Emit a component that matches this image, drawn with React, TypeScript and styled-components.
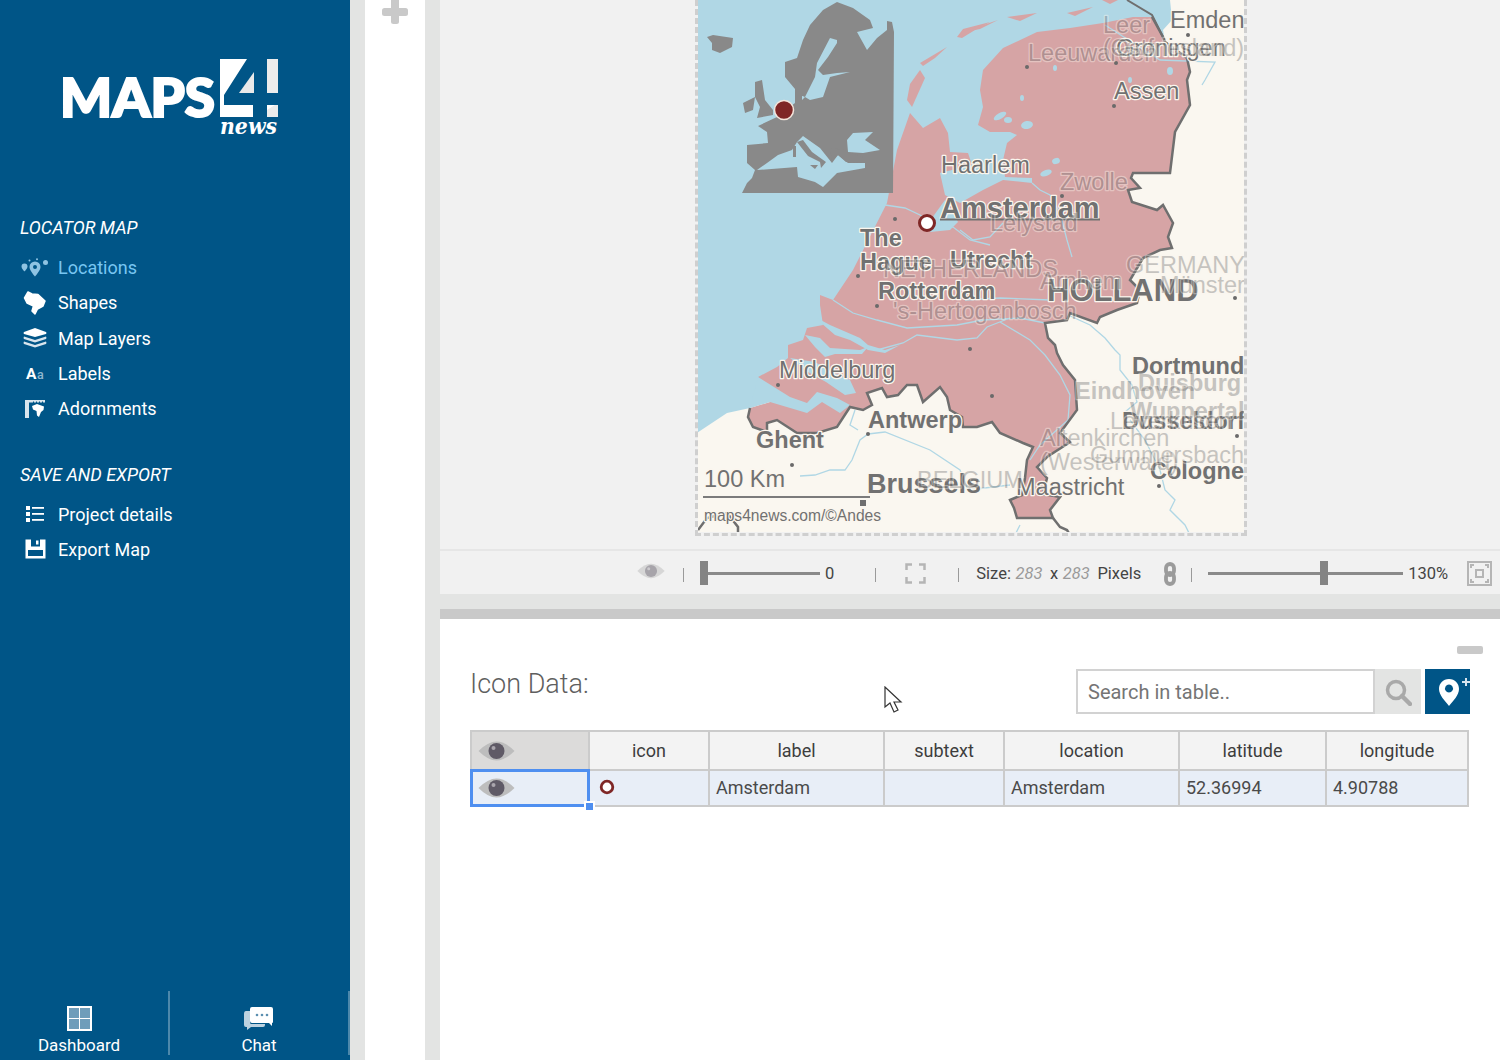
import React from "react";
import styled, { createGlobalStyle } from "styled-components";

const GlobalStyle = createGlobalStyle`
  html, body {
    margin: 0;
    padding: 0;
    width: 1500px;
    height: 1060px;
    overflow: hidden;
    background: #fff;
    font-family: Roboto, "Liberation Sans", sans-serif;
  }
  * { box-sizing: border-box; }
`;

const Page = styled.div`
  position: relative;
  display: grid;
  grid-template-columns: 350px 15px 60px 15px 1fr;
  width: 1500px;
  height: 1060px;
  overflow: hidden;
`;

const Sidebar = styled.aside`
  display: flex;
  flex-direction: column;
  background: #005587;
  color: #fff;
`;

const LogoWrap = styled.div`
  height: 215px;
  padding: 57px 0 0 60px;
`;

const NavTitle = styled.div`
  padding-left: 20px;
  height: 26px;
  line-height: 26px;
  font-size: 18px;
  font-style: italic;
  color: #fff;
`;

const NavList = styled.div<{ $top?: number }>`
  display: flex;
  flex-direction: column;
  margin-top: ${(p) => p.$top ?? 9}px;
  margin-bottom: 36px;
`;

const NavItem = styled.div<{ $active?: boolean }>`
  display: flex;
  align-items: center;
  height: 35.3px;
  padding-left: 20px;
  font-size: 18px;
  color: ${(p) => (p.$active ? "#78c6f2" : "#fff")};
`;

const NavIcon = styled.span`
  display: flex;
  justify-content: center;
  width: 30px;
  margin-right: 8px;
`;

const SideFooter = styled.div`
  display: grid;
  grid-template-columns: 170px 180px;
  margin-top: auto;
  height: 69px;
`;

const FootBtn = styled.div<{ $shift?: number }>`
  display: flex;
  flex-direction: column;
  align-items: center;
  margin-bottom: 9px;
  padding-top: 15px;
  padding-right: ${(p) => p.$shift ?? 0}px;
  border-right: 2px solid #4d88ab;
  font-size: 17px;
  color: #fff;
  svg { margin-bottom: 4px; }
  span { line-height: 20px; }
`;

const Gutter = styled.div`
  background: #e3e4e3;
`;

const ToolColumn = styled.div`
  display: flex;
  justify-content: center;
  padding-right: 1px;
  background: #fff;
`;

const Main = styled.main`
  display: flex;
  flex-direction: column;
  background: #fff;
`;

const MapStage = styled.div`
  display: flex;
  justify-content: center;
  height: 549px;
  padding-left: 2px;
  background: #f1f1f1;
`;

const MapFrame = styled.div`
  width: 552px;
  height: 536px;
  border-left: 3px dashed #cfcfcf;
  border-right: 3px dashed #cfcfcf;
  border-bottom: 3px dashed #cfcfcf;
  overflow: hidden;
  svg { display: block; }
`;

const Toolbar = styled.div`
  display: flex;
  align-items: center;
  height: 45px;
  padding: 2px 0 0 197px;
  background: #f1f1f1;
  border-top: 2px solid #e6e6e6;
  font-size: 16.5px;
  color: #444;
`;

const Sep = styled.span<{ $before: number; $after: number }>`
  width: 1px;
  height: 14px;
  margin: 2px ${(p) => p.$after}px 0 ${(p) => p.$before}px;
  background: #9a9a9a;
`;

const Slider = styled.div<{ $width: number }>`
  position: relative;
  width: ${(p) => p.$width}px;
  height: 3px;
  background: #8a8a8a;
`;

const Thumb = styled.span<{ $at: number }>`
  position: absolute;
  left: ${(p) => p.$at}px;
  top: -11px;
  width: 8px;
  height: 24px;
  background: #848484;
`;

const ToolText = styled.span<{ $left?: number }>`
  margin-left: ${(p) => p.$left ?? 0}px;
  white-space: pre;
`;

const Dim = styled.em`
  margin: 0 3.5px 0 0.5px;
  color: #9a9a9a;
  font-style: italic;
`;

const ToolIcon = styled.span<{ $left?: number; $lift?: number }>`
  display: flex;
  margin-left: ${(p) => p.$left ?? 0}px;
  margin-bottom: ${(p) => p.$lift ?? 0}px;
`;

const BandLight = styled.div`
  height: 15px;
  background: #e3e4e3;
`;

const BandDark = styled.div`
  height: 10px;
  background: #c9c9c9;
`;

const DataPanel = styled.section`
  flex: 1;
  display: flex;
  flex-direction: column;
  padding: 27px 30px 0 30px;
  background: #fff;
`;

const Minimize = styled.div`
  align-self: flex-end;
  width: 26px;
  height: 8px;
  margin-right: -13px;
  border-radius: 2px;
  background: #c9c9c9;
`;

const PanelHead = styled.div`
  display: flex;
  justify-content: space-between;
  align-items: flex-start;
  margin-top: 15px;
`;

const PanelTitle = styled.h2`
  margin: 0;
  font-size: 27px;
  line-height: 30px;
  font-weight: 300;
  color: #5f5f5f;
`;

const SearchRow = styled.div`
  display: flex;
`;

const SearchInput = styled.div`
  display: flex;
  align-items: center;
  width: 299px;
  height: 45px;
  padding-left: 10px;
  border: 2px solid #d2d2d2;
  font-size: 20px;
  color: #757575;
`;

const SearchBtn = styled.div`
  display: flex;
  align-items: center;
  justify-content: center;
  width: 46px;
  height: 45px;
  background: #e3e4e3;
`;

const AddBtn = styled.div`
  display: flex;
  width: 45px;
  height: 45px;
  margin-left: 4px;
  background: #005587;
`;

const DataTable = styled.div`
  display: grid;
  grid-template-columns: 118px 120px 175px 120px 175px 147px 142px;
  grid-template-rows: 39px 36px;
  width: 999px;
  margin-top: 16px;
  border-top: 2px solid #cbcbcb;
  border-left: 2px solid #cbcbcb;
`;

const HeadCell = styled.div<{ $shade?: boolean }>`
  display: flex;
  align-items: center;
  justify-content: ${(p) => (p.$shade ? "flex-start" : "center")};
  padding-left: ${(p) => (p.$shade ? "6px" : "0")};
  background: ${(p) => (p.$shade ? "#dcdbda" : "#f3f3f3")};
  border-right: 2px solid #cbcbcb;
  border-bottom: 2px solid #cbcbcb;
  font-size: 18px;
  color: #3d3d3d;
`;

const BodyCell = styled.div<{ $selected?: boolean }>`
  position: relative;
  display: flex;
  align-items: center;
  padding: 0 0 2px 6px;
  background: #e8eef7;
  border-right: 2px solid #cbcbcb;
  border-bottom: 2px solid #cbcbcb;
  font-size: 18px;
  color: #4a4a4a;
  ${(p) => p.$selected && `
    margin: -2px 0 0 -2px;
    border: 3px solid #4f8ff0;
    padding: 0 0 0 5px;
  `}
`;

const DotWrap = styled.span`
  display: flex;
  margin-left: 3px;
`;

const Handle = styled.span`
  position: absolute;
  right: -8px;
  bottom: -8px;
  width: 11px;
  height: 11px;
  background: #4f8ff0;
  border: 2px solid #fff;
  z-index: 2;
`;

const Cursor = styled.svg`
  position: absolute;
  left: 884px;
  top: 686px;
`;

const MapLabel = styled.text<{ $size?: number; $bold?: boolean; $faded?: boolean }>`
  font-family: "Liberation Sans", Arial, sans-serif;
  font-size: ${(p) => p.$size ?? 23.5}px;
  font-weight: ${(p) => (p.$bold ? 700 : 400)};
  fill: #717171;
  stroke: #fbf6ee;
  stroke-width: 2.5px;
  stroke-linejoin: round;
  paint-order: stroke;
  opacity: ${(p) => (p.$faded ? 0.38 : 1)};
`;

const LogoText = styled.text<{ $serif?: boolean }>`
  font-family: ${(p) => (p.$serif ? '"DejaVu Serif", serif' : 'Lato, "Open Sans", sans-serif')};
  font-weight: ${(p) => (p.$serif ? 700 : 900)};
  font-style: ${(p) => (p.$serif ? "italic" : "normal")};
  fill: #fff;
  stroke: #fff;
  stroke-width: ${(p) => (p.$serif ? 0 : 2.2)}px;
`;

const BLUE = "#005587";

const Logo = () => (
  <svg width="225" height="85" viewBox="60 57 225 85">
    <LogoText x="60" y="116.500" fontSize="53" textLength="155" lengthAdjust="spacingAndGlyphs">
      MAPS
    </LogoText>
    <rect x="220" y="59" width="58" height="58" fill="#fff" />
    <polygon points="256,117 278,103 278,117" fill="#ececec" />
    <rect x="267" y="59" width="11" height="34" fill="#ececec" />
    <polygon
      points="247,59 224,95 224,105 253,105 253,117 267,117 267,105 278,105 278,93 267,93 267,59"
      fill={BLUE}
    />
    <polygon points="254,72 254,93 239,93" fill="#e9e9e9" />
    <LogoText $serif x="220" y="134" fontSize="23" textLength="57" lengthAdjust="spacingAndGlyphs">
      news
    </LogoText>
  </svg>
);

const PinsIcon = () => (
  <svg width="28" height="20" viewBox="0 0 28 20" fill="#8fc3e2">
    <path d="M3.5 5.5a3 3 0 0 1 3 3c0 2-3 5-3 5s-3-3-3-5a3 3 0 0 1 3-3z" />
    <path d="M14 3.5a5.5 5.5 0 0 1 5.5 5.5c0 3.5-5.5 9.5-5.5 9.5S8.500 12.500 8.500 9A5.500 5.500 0 0 1 14 3.500zm0 3.500a2 2 0 1 0 0 4 2 2 0 0 0 0-4z" fillRule="evenodd" />
    <circle cx="24.500" cy="4.500" r="2.500" />
    <circle cx="16" cy="1.200" r="1" />
    <circle cx="8.500" cy="2.500" r="1" />
  </svg>
);

const ShapeIcon = () => (
  <svg width="24" height="24" viewBox="0 0 24 24" fill="#fff" stroke="#fff" strokeWidth="1.500" strokeLinejoin="round">
    <polygon points="1.500,7 5,1 9,3 15,3.500 22,10 20,15 14.500,18 12,23 9,20 10.500,15 4,12" />
  </svg>
);

const LayersIcon = () => (
  <svg width="24" height="20" viewBox="0 0 24 20" fill="#fff">
    <path d="M12 0 L23 4 Q24 5 23 6 L12 9 L1 6 Q0 5 1 4 Z" />
    <path d="M1 8.500 L12 12 L23 8.500 Q24 10 23 11 L12 14.500 L1 11 Q0 10 1 8.500 Z" opacity=".85" />
    <path d="M1 13.500 L12 17 L23 13.500 Q24 15 23 16 L12 19.500 L1 16 Q0 15 1 13.500 Z" opacity=".85" />
  </svg>
);

const LabelIcon = () => (
  <svg width="24" height="16" viewBox="0 0 24 16">
    <text x="3" y="13" fontFamily="Roboto, sans-serif" fontWeight="700" fontSize="15.500" fill="#fff">A</text>
    <text x="14" y="13" fontFamily="Roboto, sans-serif" fontWeight="500" fontSize="12.500" fill="#8fb8d0">a</text>
  </svg>
);

const AdornIcon = () => (
  <svg width="22" height="20" viewBox="0 0 22 20" fill="#fff">
    <path d="M1 1h20v2.500h-2v-1h-1v1h-2v-1h-1v1h-2v-1h-1v1h-2v-1h-1v1H5v15.500H1z" opacity=".85" />
    <path d="M8 7 L13 5 L20 7.500 L19.500 11 L17 13 L15 18 L13 16.500 L12.500 12 L9 10.500 Z" />
  </svg>
);

const ListIcon = () => (
  <svg width="20" height="18" viewBox="0 0 20 18" fill="#fff">
    <rect x="1" y="1" width="4" height="4" />
    <rect x="1" y="7" width="4" height="4" />
    <rect x="1" y="13" width="4" height="4" />
    <rect x="7" y="2" width="12" height="1.800" />
    <rect x="7" y="8" width="12" height="1.800" />
    <rect x="7" y="14" width="12" height="1.800" />
  </svg>
);

const SaveIcon = () => (
  <svg width="21" height="20" viewBox="0 0 21 20" fill="#fff">
    <path fillRule="evenodd" d="M0.500 0.500h20v19h-20zM6 0.500v7h9v-7zM3 11v6h15v-6z" />
    <rect x="11" y="1.500" width="2.500" height="4" />
  </svg>
);

const DashIcon = () => (
  <svg width="25" height="25" viewBox="0 0 25 25">
    <rect x="0" y="0" width="25" height="25" fill="#fff" />
    <rect x="2" y="2" width="10" height="10" fill="#6f9dba" />
    <rect x="13" y="2" width="10" height="10" fill="#6f9dba" />
    <rect x="2" y="13" width="10" height="10" fill="#6f9dba" />
    <rect x="13" y="13" width="10" height="10" fill="#6f9dba" />
  </svg>
);

const ChatIcon = () => (
  <svg width="30" height="25" viewBox="0 0 30 25">
    <path d="M6 5 H2 Q0 5 0 8 V19 Q0 21 2 21 H3 V24 L7 21 H19 Q21 21 21 19 V18 H7 Q6 18 6 16 Z" fill="#bcd2e0" />
    <path d="M8 1 H27 Q29 1 29 3 V16 Q29 17 28 17 V20 L25 17 H8 Q6 17 6 15 V3 Q6 1 8 1 Z" fill="#fff" />
    <circle cx="13" cy="9" r="1.300" fill="#5b8fb0" />
    <circle cx="18" cy="9" r="1.300" fill="#5b8fb0" />
    <circle cx="23" cy="9" r="1.300" fill="#5b8fb0" />
  </svg>
);

const PlusIcon = () => (
  <svg width="26" height="24" viewBox="0 0 26 24" fill="#c9c9c9">
    <rect x="9" y="-4" width="8" height="28" rx="2.500" />
    <rect x="0" y="8" width="26" height="8" rx="2.500" />
  </svg>
);

const EyeIcon = ({ faint }: { faint?: boolean }) => (
  <svg width={faint ? 28 : 37} height={faint ? 16 : 20} viewBox="0 0 37 20" opacity={faint ? 0.5 : 1}>
    <path d="M0.500 10 Q10 0.500 18.500 0.500 Q27 0.500 36.500 10 Q27 19.500 18.500 19.500 Q10 19.500 0.500 10 Z" fill="#bdbdbd" />
    <circle cx="18.500" cy="10" r="8" fill="#5f5a66" />
    <circle cx="15.500" cy="7" r="2" fill="#aaa6ad" />
  </svg>
);

const LocatorDot = () => (
  <svg width="16" height="16" viewBox="0 0 16 16">
    <circle cx="8" cy="8" r="5.800" fill="#fff" stroke="#7f2726" strokeWidth="2.800" />
  </svg>
);

const FrameIcon = () => (
  <svg width="21" height="21" viewBox="0 0 21 21" fill="none" stroke="#b5b5b5" strokeWidth="2.500">
    <path d="M7 1.500H1.500V7M14 1.500h5.500V7M7 19.500H1.500V14M14 19.500h5.500V14" />
  </svg>
);

const LinkIcon = () => (
  <svg width="12" height="24" viewBox="0 0 12 24" fill="none" stroke="#9b9b9b" strokeWidth="3.800">
    <rect x="2" y="2" width="8" height="11" rx="4" />
    <rect x="2" y="11" width="8" height="11" rx="4" />
  </svg>
);

const FitIcon = () => (
  <svg width="25" height="25" viewBox="0 0 25 25" fill="none" stroke="#b5b5b5">
    <rect x="1" y="1" width="23" height="23" strokeWidth="2" />
    <rect x="9" y="9" width="7" height="7" strokeWidth="2" />
    <path d="M4 7V4h3M21 7V4h-3M4 18v3h3M21 18v3h-3" strokeWidth="2" />
  </svg>
);

const SearchIcon = () => (
  <svg width="28" height="28" viewBox="0 0 28 28" fill="none" stroke="#a9a9a9">
    <circle cx="12" cy="12" r="8.500" strokeWidth="3.500" />
    <path d="M18 18l8 8" strokeWidth="4.500" strokeLinecap="round" />
  </svg>
);

const AddPinIcon = () => (
  <svg width="45" height="45" viewBox="0 0 45 45">
    <path fillRule="evenodd" fill="#fff" d="M24 10 C30 10 34 14.500 34 20 C34 26 28 32 24 37 C20 32 14 26 14 20 C14 14.500 18 10 24 10 Z M24 15.500 a4 4 0 1 0 0.010 0 Z" />
    <path d="M41 9v8M37 13h8" stroke="#d6e4ee" strokeWidth="2" />
  </svg>
);

// border of the Netherlands, north to south-west, page coordinates
const landBorder =
  "1152,17 1163,37 1165,42 1187,58 1190,72 1187,80 1190,105 1175,132 1170,173 1133,173 1131,178 1140,188 1128,190 1132,202 1157,210 1163,205 1173,223 1168,237 1172,248 1160,250 1143,258 1130,280 1140,290 1137,303 1117,310 1100,317 1097,323 1070,313 1067,320 1045,323 1048,338 1055,345 1057,353 1063,365 1075,380 1077,410 1060,433 1070,442 1047,457 1037,467 1047,478 1043,494 1060,497 1050,510 1053,518 1017,518 1014,508 1010,500 1022,495 1025,478 1027,460 1033,447 1023,443 1000,433 992,422 977,427 963,427 962,417 950,410 947,397 940,387 923,402 917,385 907,385 898,395 887,397 882,388 867,393 872,405 863,410 850,407 837,427 817,433 797,433 777,420 767,423 767,432 753,427 748,417 750,408";

const coast =
  "770,402 758,377 777,367 788,358 788,345 803,340 807,328 823,325 820,305 820,295 833,300 853,270 887,203 897,150 910,113 923,128 940,118 948,133 950,152 968,153 972,165 940,173 945,195 960,203 983,190 1003,180 1032,183 1032,178 1005,177 1003,160 1007,143 1017,135 1010,132 990,132 978,125 983,107 980,90 983,70 1003,48 1037,32 1070,28 1103,23 1133,17";

const waterShapes = [
  "815,317 830,325 860,338 868,345 885,350 900,345 885,353 868,350 850,340 835,335 820,322",
  "805,335 820,338 830,348 860,350 868,347 862,354 835,354 825,357 815,347",
  "790,358 815,362 832,372 850,380 856,393 845,395 826,382 808,372",
  "758,377 790,397 807,403 817,392 837,398 850,405 840,413 822,402 807,413 770,402 750,408",
  "945,200 932,218 930,232 950,230 958,222",
];

const islands = [
  "920,70 925,78 912,107 907,100 910,84",
  "920,63 947,47 935,58 923,66",
  "957,37 963,29 990,22 975,30 962,38",
  "960,33 998,20 980,29",
  "1007,17 1037,13 1020,21",
  "1067,13 1093,7 1075,16",
  "1102,0 1118,0 1110,4",
];

const rivers = [
  "833,300 853,313 877,320 907,328 957,325 983,320 1020,318 1045,323",
  "877,350 903,343 917,335 957,340 977,338 987,327 1010,318",
  "885,205 905,208 920,215 930,222",
  "1032,183 1040,190 1050,195 1060,213 1067,240 1072,257",
  "960,230 973,240 990,237 1003,223",
  "938,223 953,227 970,240 990,245",
  "965,300 1000,298 1050,300",
  "1068,315 1090,325 1105,338 1115,350 1120,355 1120,370 1132,385 1137,402 1125,412",
  "1000,322 1030,340 1045,355 1060,375 1070,395 1068,420 1040,445 1030,460",
  "1130,420 1145,440 1160,470 1165,490 1175,500 1170,510 1185,525 1190,535",
  "868,434 885,432 930,450 960,470 968,490 1010,485",
  "868,434 860,440 852,460 845,470 830,470 815,475 800,476",
  "1020,525 1015,535",
  "855,410 850,425 858,430",
  "1105,25 1160,60 1215,62 1205,80 1202,85",
];

const lakes: [number, number, number, number, number][] = [
  [1055, 68, 2, 3, 0],
  [1170, 71, 3, 4, 0],
  [1130, 80, 2, 3, 0],
  [1022, 98, 2, 3, 0],
  [1000, 116, 7, 3, -30],
  [1008, 120, 4, 3, 0],
  [1027, 125, 6, 4, -10],
  [1056, 161, 4, 3, -20],
  [1046, 173, 6, 3, -20],
];

const dots = [
  [1027, 67], [1116, 63], [1114, 106], [1188, 35], [1062, 196], [895, 219], [858, 276], [877, 306],
  [970, 349], [778, 385], [868, 434], [792, 465], [992, 396], [1235, 298], [1237, 436], [1159, 486],
];

const europe =
  "742,193 893,193 894,32 892,22 887,21 887,30 877,38 867,50 857,32 873,28 870,20 853,8 837,2 823,10 810,25 803,40 797,58 785,62 785,77 800,95 805,97 802,100 802,92 795,87 795,103 777,117 758,126 767,132 768,143 747,145 747,163 755,170 752,178 747,183";

const LocatorMap = () => (
  <svg width="546" height="532" viewBox="698 0 546 532">
    <rect x="690" y="0" width="560" height="540" fill="#b0d7e5" />
    <polygon
      points="1170,0 1250,0 1250,540 690,540 690,436 697,433 727,413 750,408 1000,300 1165,42 1163,30 1172,20"
      fill="#faf7f0"
    />
    <polygon points={`${landBorder} ${coast}`} fill="#d6a4a5" />
    {islands.map((pts) => (
      <polygon key={pts} points={pts} fill="#d6a4a5" />
    ))}
    {waterShapes.map((pts) => (
      <polygon key={pts} points={pts} fill="#b0d7e5" />
    ))}
    {lakes.map(([cx, cy, rx, ry, r]) => (
      <ellipse key={`${cx}-${cy}`} cx={cx} cy={cy} rx={rx} ry={ry} transform={`rotate(${r} ${cx} ${cy})`} fill="#b0d7e5" />
    ))}
    {rivers.map((pts) => (
      <polyline key={pts} points={pts} fill="none" stroke="#b0d7e5" strokeWidth="1.300" />
    ))}
    <polyline points={landBorder} fill="none" stroke="#6f6f6f" strokeWidth="2.500" />
    <polyline points="1127,0 1152,15 1163,37" fill="none" stroke="#6f6f6f" strokeWidth="2" />
    <polyline points="1053,518 1060,527 1067,530 1070,535" fill="none" stroke="#6f6f6f" strokeWidth="2.500" />
    <polyline points="698,530 707,518 727,513 738,527 738,535" fill="none" stroke="#6f6f6f" strokeWidth="2.500" />
    {dots.map(([cx, cy]) => (
      <circle key={`${cx}-${cy}`} cx={cx} cy={cy} r="2" fill="#6a6a6a" />
    ))}

    <polygon points={europe} fill="#898989" />
    <polygon points="755,82 762,80 765,100 773,110 773,115 757,118 760,107 755,97" fill="#898989" />
    <polygon points="743,103 755,97 753,110 745,113" fill="#898989" />
    <polygon points="707,37 713,35 733,38 732,47 720,53 712,50 712,43" fill="#898989" />
    <polygon
      points="837,40 830,38 817,63 815,77 805,97 810,100 823,97 830,77 850,72 837,73 823,75 818,70 828,57 837,43"
      fill="#b0d7e5"
    />
    <polygon
      points="757,170 767,163 778,155 792,150 797,142 803,136 820,148 832,163 838,155 848,163 865,163 865,168 837,173 823,187 815,182 798,177 797,167"
      fill="#b0d7e5"
    />
    <polygon points="797,142 803,140 812,152 826,162 821,168 820,162 808,156" fill="#898989" />
    <polygon points="793,146 796,146 796,157 793,157" fill="#898989" />
    <polygon points="810,165 818,165 815,169" fill="#898989" />
    <polygon points="830,148 845,150 865,158 865,163 846,162 838,155 832,160" fill="#898989" />
    <polygon points="847,140 853,133 873,132 865,140 880,150 863,153 848,152" fill="#b0d7e5" />
    <circle cx="784" cy="110" r="9.500" fill="#7f2726" stroke="#f5e6dc" strokeWidth="1.500" />

    <MapLabel x="1170" y="28">Emden</MapLabel>
    <MapLabel x="1116" y="56">Groningen</MapLabel>
    <MapLabel x="1114" y="99">Assen</MapLabel>
    <MapLabel x="941" y="173">Haarlem</MapLabel>
    <MapLabel $bold $size={29} x="940" y="218">Amsterdam</MapLabel>
    <rect x="940" y="218.500" width="160" height="2" fill="#717171" />
    <MapLabel $bold x="860" y="246">The</MapLabel>
    <MapLabel $bold x="860" y="270">Hague</MapLabel>
    <MapLabel $bold x="950" y="268">Utrecht</MapLabel>
    <MapLabel $bold $size={31} x="1047" y="301">HOLLAND</MapLabel>
    <MapLabel $bold x="878" y="299">Rotterdam</MapLabel>
    <MapLabel x="779" y="378">Middelburg</MapLabel>
    <MapLabel $bold x="1132" y="374">Dortmund</MapLabel>
    <MapLabel $bold x="1122" y="429">Dusseldorf</MapLabel>
    <MapLabel $bold x="868" y="428">Antwerp</MapLabel>
    <MapLabel $bold x="756" y="448">Ghent</MapLabel>
    <MapLabel $bold x="1150" y="479">Cologne</MapLabel>
    <MapLabel $bold $size={27} x="867" y="493">Brussels</MapLabel>
    <MapLabel x="1016" y="495">Maastricht</MapLabel>
    <MapLabel x="704" y="487">100 Km</MapLabel>
    <rect x="703" y="496" width="167" height="2" fill="#7b7b7b" />
    <rect x="860" y="500" width="6" height="6" fill="#6f6f6f" />
    <MapLabel $size={15.6} x="704" y="521">maps4news.com/©Andes</MapLabel>

    <MapLabel $faded x="1103" y="33">Leer</MapLabel>
    <MapLabel $faded x="1028" y="61">Leeuwarden</MapLabel>
    <MapLabel $faded x="1103" y="56">(Ostfriesland)</MapLabel>
    <MapLabel $faded x="1060" y="190">Zwolle</MapLabel>
    <MapLabel $faded x="990" y="231">Lelystad</MapLabel>
    <MapLabel $faded x="883" y="277">NETHERLANDS</MapLabel>
    <MapLabel $faded x="1126" y="273">GERMANY</MapLabel>
    <MapLabel $faded x="1040" y="289">Arnhem</MapLabel>
    <MapLabel $faded x="1160" y="293">Münster</MapLabel>
    <MapLabel $faded x="893" y="319">'s-Hertogenbosch</MapLabel>
    <MapLabel $faded $bold x="1138" y="391">Duisburg</MapLabel>
    <MapLabel $faded $bold x="1075" y="399">Eindhoven</MapLabel>
    <MapLabel $faded $bold x="1130" y="419">Wuppertal</MapLabel>
    <MapLabel $faded x="1110" y="429">Leverkusen</MapLabel>
    <MapLabel $faded x="1040" y="446">Altenkirchen</MapLabel>
    <MapLabel $faded x="1040" y="470">(Westerwald)</MapLabel>
    <MapLabel $faded x="1090" y="463">Gummersbach</MapLabel>
    <MapLabel $faded x="917" y="488">BELGIUM</MapLabel>

    <circle cx="927" cy="223" r="7.500" fill="#fff" stroke="#7f2726" strokeWidth="3" />
  </svg>
);

const columns = ["icon", "label", "subtext", "location", "latitude", "longitude"];
const row = ["", "Amsterdam", "", "Amsterdam", "52.36994", "4.90788"];

const App = () => {
  return (
    <Page>
      <GlobalStyle />
      <Sidebar>
        <LogoWrap>
          <Logo />
        </LogoWrap>
        <NavTitle>LOCATOR MAP</NavTitle>
        <NavList>
          <NavItem $active><NavIcon><PinsIcon /></NavIcon>Locations</NavItem>
          <NavItem><NavIcon><ShapeIcon /></NavIcon>Shapes</NavItem>
          <NavItem><NavIcon><LayersIcon /></NavIcon>Map Layers</NavItem>
          <NavItem><NavIcon><LabelIcon /></NavIcon>Labels</NavItem>
          <NavItem><NavIcon><AdornIcon /></NavIcon>Adornments</NavItem>
        </NavList>
        <NavTitle>SAVE AND EXPORT</NavTitle>
        <NavList $top={8}>
          <NavItem><NavIcon><ListIcon /></NavIcon>Project details</NavItem>
          <NavItem><NavIcon><SaveIcon /></NavIcon>Export Map</NavItem>
        </NavList>
        <SideFooter>
          <FootBtn $shift={10}><DashIcon /><span>Dashboard</span></FootBtn>
          <FootBtn><ChatIcon /><span>Chat</span></FootBtn>
        </SideFooter>
      </Sidebar>
      <Gutter />
      <ToolColumn>
        <div><PlusIcon /></div>
      </ToolColumn>
      <Gutter />
      <Main>
        <MapStage>
          <MapFrame>
            <LocatorMap />
          </MapFrame>
        </MapStage>
        <Toolbar>
          <ToolIcon $lift={5}><EyeIcon faint /></ToolIcon>
          <Sep $before={18} $after={16} />
          <Slider $width={120}><Thumb $at={0} /></Slider>
          <ToolText $left={5}>0</ToolText>
          <Sep $before={41} $after={29} />
          <ToolIcon><FrameIcon /></ToolIcon>
          <Sep $before={32} $after={17} />
          <ToolText>Size: <Dim>283</Dim> x <Dim>283</Dim> Pixels</ToolText>
          <ToolIcon $left={23}><LinkIcon /></ToolIcon>
          <Sep $before={15} $after={16} />
          <Slider $width={195}><Thumb $at={112} /></Slider>
          <ToolText $left={5}>130%</ToolText>
          <ToolIcon $left={19}><FitIcon /></ToolIcon>
        </Toolbar>
        <BandLight />
        <BandDark />
        <DataPanel>
          <Minimize />
          <PanelHead>
            <PanelTitle>Icon Data:</PanelTitle>
            <SearchRow>
              <SearchInput>Search in table..</SearchInput>
              <SearchBtn><SearchIcon /></SearchBtn>
              <AddBtn><AddPinIcon /></AddBtn>
            </SearchRow>
          </PanelHead>
          <DataTable>
            <HeadCell $shade><EyeIcon /></HeadCell>
            {columns.map((c) => (
              <HeadCell key={c}>{c}</HeadCell>
            ))}
            <BodyCell $selected>
              <EyeIcon />
              <Handle />
            </BodyCell>
            {row.map((v, i) => (
              <BodyCell key={i}>{i === 0 ? <DotWrap><LocatorDot /></DotWrap> : v}</BodyCell>
            ))}
          </DataTable>
        </DataPanel>
      </Main>
      <Cursor width="20" height="28" viewBox="0 0 20 28">
        <path d="M1 1 L1 21 L6 17 L10 26 L14 24 L10 16 L17 16 Z" fill="#fff" stroke="#333" strokeWidth="1.200" />
      </Cursor>
    </Page>
  );
};

export default App;
